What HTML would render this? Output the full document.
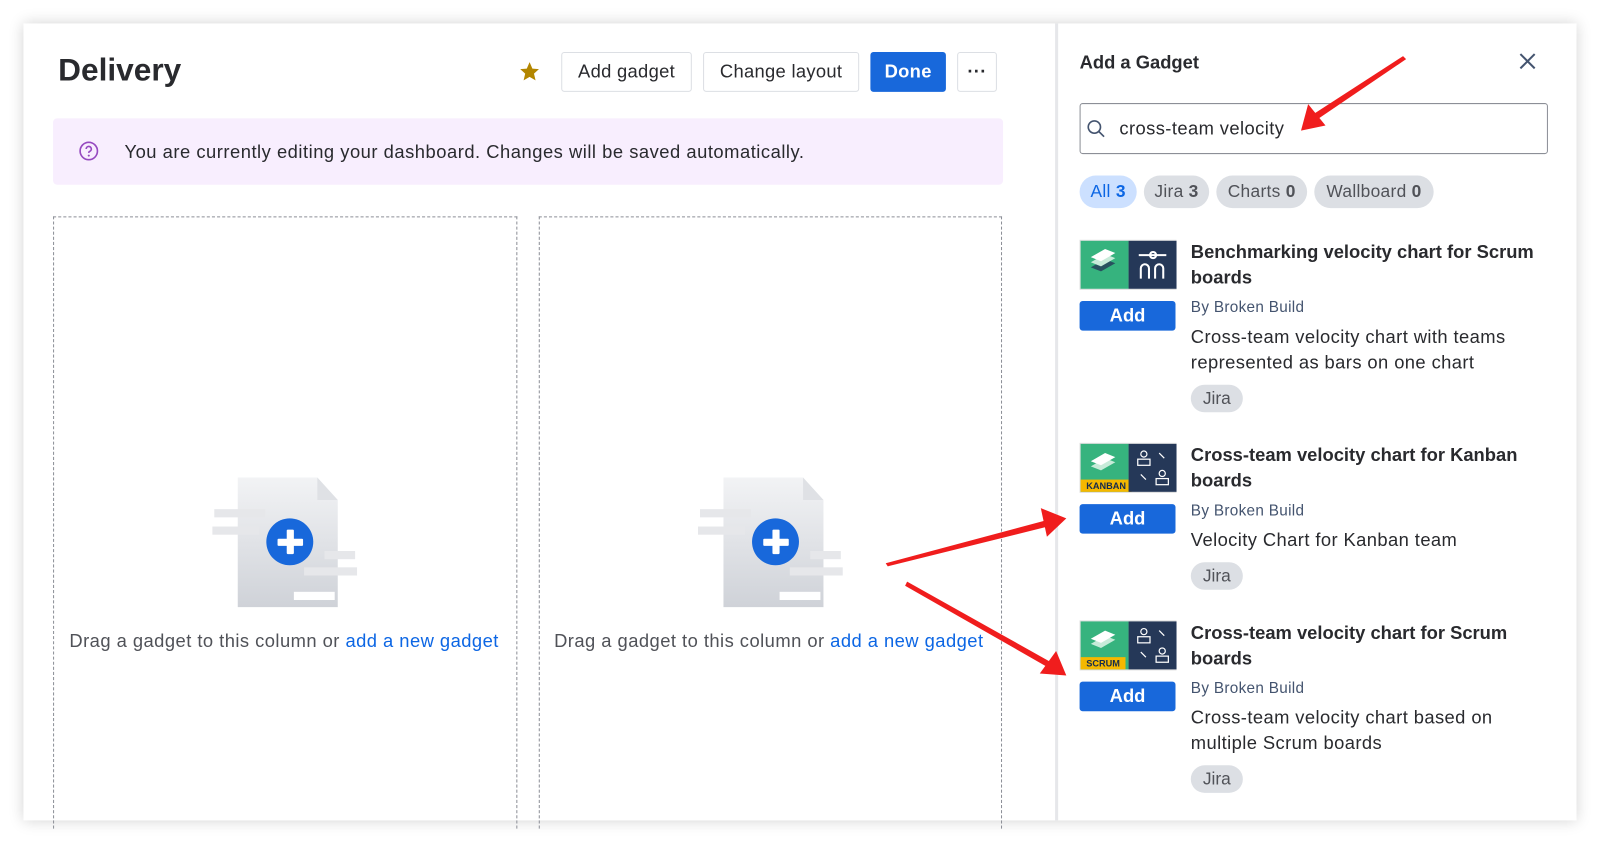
<!DOCTYPE html>
<html><head><meta charset="utf-8"><style>
*{box-sizing:border-box;margin:0;padding:0}
html,body{width:1600px;height:844px;overflow:hidden;background:#fff;font-family:"Liberation Sans",sans-serif;color:#292a2e}
#w{position:absolute;left:0;top:0;width:1568px;height:827px;transform:scale(1.0204);transform-origin:0 0}
.card{position:absolute;left:23px;top:23px;width:1522px;height:781px;background:#fff;box-shadow:0 0 14px rgba(0,0,0,.18)}
.a{position:absolute}
.btn{position:absolute;top:51px;height:39px;border:1px solid #dcdfe4;border-radius:3px;font-size:18px;letter-spacing:.3px;display:flex;align-items:center;justify-content:center;color:#292a2e;background:#fff}
.col{position:absolute;top:212px;height:600px;border:1px dashed #8c8f97;border-bottom:none}
.txt{position:absolute;font-size:18px;color:#505258;white-space:nowrap;letter-spacing:.45px}
.txt b{font-weight:normal;color:#0c66e4}
.chip{position:absolute;top:172px;height:32px;border-radius:16px;background:#dcdfe4;color:#505258;font-size:17px;display:flex;align-items:center;justify-content:center;letter-spacing:.3px}
.chip b{margin-left:5px}
.add{position:absolute;left:1058px;width:94px;height:29px;background:#1868db;color:#fff;border-radius:3px;font-size:18px;font-weight:bold;display:flex;align-items:center;justify-content:center}
.t{position:absolute;left:1167px;font-size:18px;font-weight:bold;line-height:25px;color:#292a2e;width:350px}
.by{position:absolute;left:1167px;font-size:15px;color:#44546f;letter-spacing:.3px}
.d{position:absolute;left:1167px;font-size:18px;line-height:25px;color:#292a2e;width:350px;letter-spacing:.4px}
.j{position:absolute;left:1167px;width:51px;height:27px;border-radius:14px;background:#dcdfe4;color:#505258;font-size:17px;display:flex;align-items:center;justify-content:center}
.ic{position:absolute;left:1058px;width:95px;height:49px;display:flex;border:1px solid #ddd}
.ic .g{width:47px;background:#36b37e;position:relative}
.ic .n{flex:1;background:#253858;position:relative}
.lbl{position:absolute;left:0;bottom:0;width:50px;height:12px;background:#f5b800;font-size:9px;font-weight:bold;color:#172b4d;text-align:center;line-height:12px}
</style></head><body><div id="w">
<div class="card"></div>
<div class="a" style="left:1034px;top:23px;width:3px;height:781px;background:#e6e7ea"></div>
<div class="a" style="left:57px;top:51px;font-size:31px;font-weight:bold;color:#292a2e">Delivery</div>
<svg class="a" style="left:508px;top:59px" width="22" height="22" viewBox="0 0 24 24"><path d="M12 2l3 7 7 .6-5.3 4.7 1.7 7.2L12 17.8 5.6 21.5l1.7-7.2L2 9.6 9 9z" fill="#b38600"/></svg>
<div class="btn" style="left:550px;width:128px">Add gadget</div>
<div class="btn" style="left:689px;width:153px">Change layout</div>
<div class="btn" style="left:853px;width:74px;background:#1868db;border-color:#1868db;color:#fff;font-weight:bold">Done</div>
<div class="btn" style="left:938px;width:39px;font-weight:bold">···</div>
<div class="a" style="left:52px;top:116px;width:931px;height:65px;background:#f8eefe;border-radius:4px"></div>
<svg class="a" style="left:77px;top:138px" width="20" height="20" viewBox="0 0 20 20"><circle cx="10" cy="10" r="8.5" fill="none" stroke="#964ac0" stroke-width="1.6"/><path d="M7.5 8a2.5 2.5 0 1 1 3.5 2.3c-.7.3-1 .8-1 1.5" fill="none" stroke="#964ac0" stroke-width="1.6"/><circle cx="10" cy="14.5" r="1" fill="#964ac0"/></svg>
<div class="a" style="left:122px;top:139px;font-size:18px;color:#292a2e;letter-spacing:.5px;white-space:nowrap">You are currently editing your dashboard. Changes will be saved automatically.</div>
<div class="col" style="left:52px;width:455px"></div>
<div class="col" style="left:528px;width:454px"></div>
<svg class="a" style="left:208px;top:468px" width="142" height="128" viewBox="0 0 142 128"><defs><linearGradient id="pg" x1="0" y1="0" x2="0" y2="1"><stop offset="0" stop-color="#f2f3f5"/><stop offset="1" stop-color="#cfd2d8"/></linearGradient></defs><path d="M25 0H103L123 22V127H25z" fill="url(#pg)"/><path d="M103 0V22H123z" fill="#dfe1e5"/><rect x="2" y="31" width="50" height="8" fill="#e6e7ea"/><rect x="0" y="48" width="46" height="8" fill="#e6e7ea"/><rect x="110" y="72" width="30" height="8" fill="#e6e7ea"/><rect x="90" y="88" width="52" height="8" fill="#e6e7ea"/><rect x="80" y="112" width="40" height="8" fill="#fff"/><circle cx="76" cy="63" r="23" fill="#1868db"/><rect x="73" y="51" width="7" height="24" rx="1" fill="#fff"/><rect x="64" y="60" width="25" height="7" rx="1" fill="#fff"/></svg>
<svg class="a" style="left:684px;top:468px" width="142" height="128" viewBox="0 0 142 128"><path d="M25 0H103L123 22V127H25z" fill="url(#pg)"/><path d="M103 0V22H123z" fill="#dfe1e5"/><rect x="2" y="31" width="50" height="8" fill="#e6e7ea"/><rect x="0" y="48" width="46" height="8" fill="#e6e7ea"/><rect x="110" y="72" width="30" height="8" fill="#e6e7ea"/><rect x="90" y="88" width="52" height="8" fill="#e6e7ea"/><rect x="80" y="112" width="40" height="8" fill="#fff"/><circle cx="76" cy="63" r="23" fill="#1868db"/><rect x="73" y="51" width="7" height="24" rx="1" fill="#fff"/><rect x="64" y="60" width="25" height="7" rx="1" fill="#fff"/></svg>
<div class="txt" style="left:68px;top:618px">Drag a gadget to this column or <b>add a new gadget</b></div>
<div class="txt" style="left:543px;top:618px">Drag a gadget to this column or <b>add a new gadget</b></div>

<div class="a" style="left:1058px;top:51px;font-size:18px;font-weight:bold;color:#292a2e">Add a Gadget</div>
<svg class="a" style="left:1488px;top:51px" width="18" height="18" viewBox="0 0 18 18"><path d="M2 2L16 16M16 2L2 16" stroke="#44546f" stroke-width="2"/></svg>
<div class="a" style="left:1058px;top:101px;width:459px;height:50px;border:1px solid #8c8f97;border-radius:3px"></div>
<svg class="a" style="left:1064px;top:116px" width="20" height="20" viewBox="0 0 20 20"><circle cx="8.5" cy="8.5" r="6" fill="none" stroke="#44546f" stroke-width="1.6"/><path d="M13 13l5 5" stroke="#44546f" stroke-width="1.6"/></svg>
<div class="a" style="left:1097px;top:116px;font-size:18px;color:#292a2e;letter-spacing:.4px">cross-team velocity</div>
<div class="chip" style="left:1058px;width:56px;background:#cce0ff;color:#0c66e4">All<b>3</b></div>
<div class="chip" style="left:1121px;width:64px">Jira<b>3</b></div>
<div class="chip" style="left:1192px;width:89px">Charts<b>0</b></div>
<div class="chip" style="left:1288px;width:117px">Wallboard<b>0</b></div>

<div class="ic" style="top:235px"><div class="g"><svg width="47" height="47" viewBox="0 0 47 47"><path d="M10 26l14-8 10 4-14 8z" fill="#253858" opacity=".8"/><path d="M10 21l14-8 10 4-14 8z" fill="#c7ebd9"/><path d="M10 16l14-8 10 4-14 8z" fill="#fff"/></svg></div><div class="n"><svg width="47" height="47" viewBox="0 0 47 47"><path d="M10 14h27M24 11a3 3 0 1 0 .01 0" stroke="#fff" stroke-width="2" fill="none"/><path d="M12 37V27a4 4 0 0 1 8 0v10M26 37V27a4 4 0 0 1 8 0v10" stroke="#fff" stroke-width="2" fill="none"/></svg></div></div>
<div class="add" style="top:295px">Add</div>
<div class="t" style="top:235px">Benchmarking velocity chart for Scrum boards</div>
<div class="by" style="top:293px">By Broken Build</div>
<div class="d" style="top:318px">Cross-team velocity chart with teams represented as bars on one chart</div>
<div class="j" style="top:377px">Jira</div>

<div class="ic" style="top:434px"><div class="g"><svg width="47" height="47" viewBox="0 0 47 47"><path d="M10 22l14-8 10 4-14 8z" fill="#c7ebd9"/><path d="M10 17l14-8 10 4-14 8z" fill="#fff"/></svg><div class="lbl">KANBAN</div></div><div class="n"><svg width="47" height="47" viewBox="0 0 47 47" fill="none" stroke="#fff" stroke-width="1.2"><circle cx="15" cy="10" r="3"/><rect x="9" y="15" width="12" height="6"/><circle cx="33" cy="29" r="3"/><rect x="27" y="34" width="12" height="6"/><path d="M30 9l5 5M12 30l5 5"/></svg></div></div>
<div class="add" style="top:494px">Add</div>
<div class="t" style="top:434px">Cross-team velocity chart for Kanban boards</div>
<div class="by" style="top:492px">By Broken Build</div>
<div class="d" style="top:517px">Velocity Chart for Kanban team</div>
<div class="j" style="top:551px">Jira</div>

<div class="ic" style="top:608px"><div class="g"><svg width="47" height="47" viewBox="0 0 47 47"><path d="M10 22l14-8 10 4-14 8z" fill="#c7ebd9"/><path d="M10 17l14-8 10 4-14 8z" fill="#fff"/></svg><div class="lbl" style="width:44px">SCRUM</div></div><div class="n"><svg width="47" height="47" viewBox="0 0 47 47" fill="none" stroke="#fff" stroke-width="1.2"><circle cx="15" cy="10" r="3"/><rect x="9" y="15" width="12" height="6"/><circle cx="33" cy="29" r="3"/><rect x="27" y="34" width="12" height="6"/><path d="M30 9l5 5M12 30l5 5"/></svg></div></div>
<div class="add" style="top:668px">Add</div>
<div class="t" style="top:608px">Cross-team velocity chart for Scrum boards</div>
<div class="by" style="top:666px">By Broken Build</div>
<div class="d" style="top:691px">Cross-team velocity chart based on multiple Scrum boards</div>
<div class="j" style="top:750px">Jira</div>

<svg class="a" style="left:0;top:0" width="1568" height="827" viewBox="0 0 1568 827">
<g fill="#f01d1d">
<path d="M1378 58L1291 117L1287 112L1375 55z"/><path d="M1275 128L1282 102L1299 123z"/>
<path d="M868 552L1025 510L1027 516L870 555z"/><path d="M1045 508L1020 498L1026 526z"/>
<path d="M889 570L1030 649L1027 654L887 574z"/><path d="M1045 662L1035 638L1019 660z"/>
</g></svg>
</div></body></html>
